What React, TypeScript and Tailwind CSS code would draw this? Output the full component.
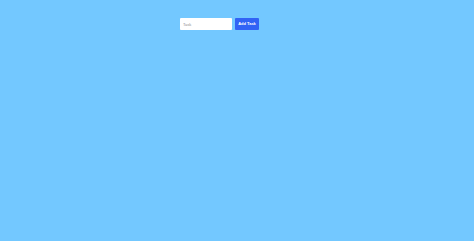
import React, { useState } from 'react';

const App = () => {
  const [task, setTask] = useState('');

  return (
    <div className="min-h-screen w-full bg-[#73c8ff] font-['Liberation_Sans',Arial,sans-serif]">
      <div className="flex items-start gap-[3px] pl-[180px] pt-[18px]">
        <input
          value={task}
          onChange={(e) => setTask(e.target.value)}
          placeholder="Task"
          className="h-[12px] w-[52px] rounded-[1px] bg-white px-[3px] text-[4px] text-gray-700 outline-none placeholder:text-[#8f8f8f]"
        />
        <button className="flex h-[12px] w-[24px] items-center justify-center rounded-[1px] bg-[#3163f5] text-[4px] font-semibold text-white">
          Add Task
        </button>
      </div>
    </div>
  );
};

export default App;
